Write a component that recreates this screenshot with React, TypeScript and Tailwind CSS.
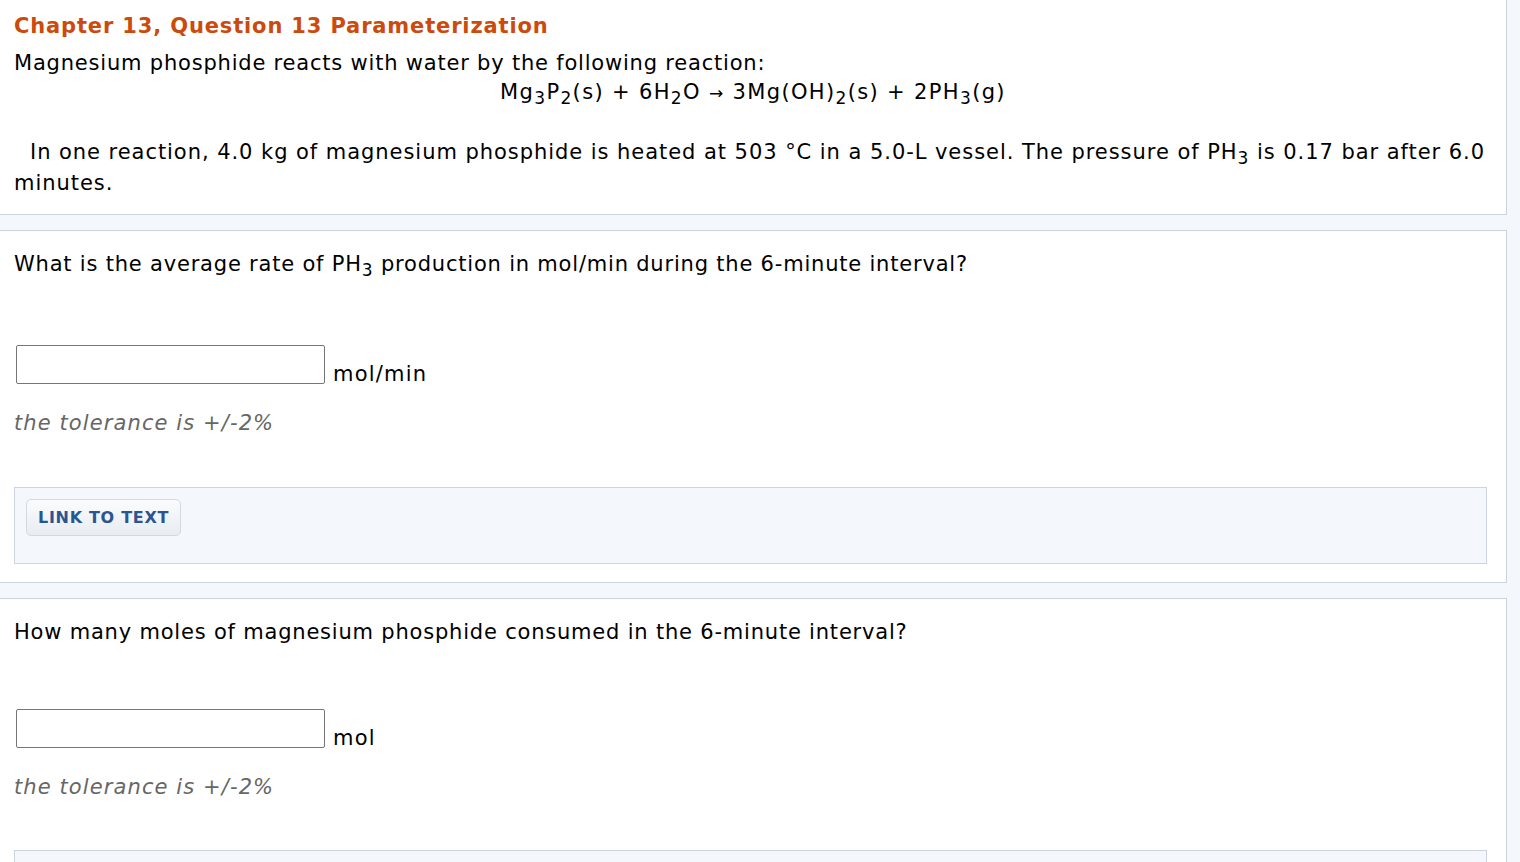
import React from "react";

const Sub = ({ children }: { children: React.ReactNode }) => (
  <span className="relative top-[5px] text-[17px] leading-none">{children}</span>
);

const AnswerRow = ({ unit }: { unit: string }) => (
  <div className="flex items-end">
    <input
      type="text"
      className="ml-[2px] h-[39px] w-[309px] rounded-[2px] border border-[#767676] bg-white outline-none"
    />
    <span className="ml-[8px] text-[21px] leading-[20px] tracking-[1.2px] text-black">{unit}</span>
  </div>
);

const LinkBox = () => (
  <div className="w-[1473px] border border-[#ccd4e0] bg-[#f4f7fb] pl-[11px] pt-[11px] pb-[27px]">
    <button className="flex h-[37px] w-[155px] items-center rounded-[5px] border border-[#d3d9e2] bg-gradient-to-b from-[#fbfcfd] to-[#e8ecf1] pl-[11px] text-[16px] font-bold tracking-[0.7px] text-[#2b5592]">
      LINK TO TEXT
    </button>
  </div>
);

export default function App() {
  return (
    <div
      className="flex h-[862px] w-full overflow-hidden bg-[#f4f7fb] text-black"
      style={{ fontFamily: '"DejaVu Sans", Verdana, sans-serif' }}
    >
      <div className="flex w-[1507px] flex-col">
        {/* --- INTRO PANEL --- */}
        <section className="border-r border-b border-[#ccd4e0] bg-white px-[14px] pt-[11px] pb-[15px]">
          <h1 className="text-[21px] font-bold leading-[30px] tracking-[0.85px] text-[#cc4a0c]">
            Chapter 13, Question 13 Parameterization
          </h1>
          <p className="mt-[7px] text-[21px] leading-[30px] tracking-[0.8px]">
            Magnesium phosphide reacts with water by the following reaction:
          </p>
          <p className="text-center text-[21px] leading-[29px] tracking-[1.35px]">
            Mg<Sub>3</Sub>P<Sub>2</Sub>(s) + 6H<Sub>2</Sub>O <span className="text-[17px]">→</span> 3Mg(OH)
            <Sub>2</Sub>(s) + 2PH<Sub>3</Sub>(g)
          </p>
          <p className="mt-[29px] indent-[16px] text-[21px] leading-[31px] tracking-[0.95px]">
            In one reaction, 4.0 kg of magnesium phosphide is heated at 503 °C in a 5.0-L vessel. The pressure of PH
            <Sub>3</Sub> is 0.17 bar after 6.0 minutes.
          </p>
        </section>

        {/* --- QUESTION 1 --- */}
        <section className="mt-[15px] border-t border-r border-b border-[#ccd4e0] bg-white px-[14px] pt-[18px] pb-[18px]">
          <p className="text-[21px] leading-[30px] tracking-[0.8px]">
            What is the average rate of PH<Sub>3</Sub> production in mol/min during the 6-minute interval?
          </p>
          <div className="mt-[66px]">
            <AnswerRow unit="mol/min" />
          </div>
          <p className="mt-[24px] text-[21px] italic leading-[30px] tracking-[1.1px] text-[#666666]">
            the tolerance is +/-2%
          </p>
          <div className="mt-[49px]">
            <LinkBox />
          </div>
        </section>

        {/* --- QUESTION 2 --- */}
        <section className="mt-[15px] border-t border-r border-[#ccd4e0] bg-white px-[14px] pt-[18px] pb-[18px]">
          <p className="text-[21px] leading-[30px] tracking-[0.8px]">
            How many moles of magnesium phosphide consumed in the 6-minute interval?
          </p>
          <div className="mt-[62px]">
            <AnswerRow unit="mol" />
          </div>
          <p className="mt-[24px] text-[21px] italic leading-[30px] tracking-[1.1px] text-[#666666]">
            the tolerance is +/-2%
          </p>
          <div className="mt-[48px]">
            <LinkBox />
          </div>
        </section>
      </div>
      <div className="flex-1 bg-[#f4f7fb]" />
    </div>
  );
}
